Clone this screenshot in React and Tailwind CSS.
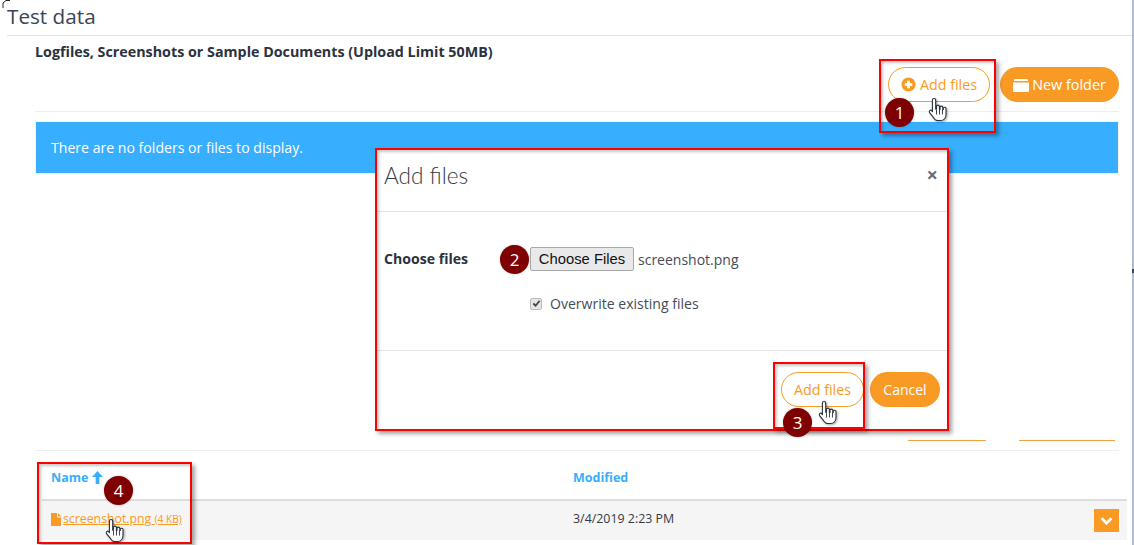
import React from "react";

function Hand({ className }) {
  return (
    <svg viewBox="0 0 20 26" className={"absolute w-[20px] h-[26px] drop-shadow-[1px_1px_1px_rgba(0,0,0,0.35)] " + className}>
      <path
        d="M6 1.500c1 0 1.700.7 1.700 1.800v9l.8 0V9.600c0-1 .7-1.500 1.500-1.500s1.400.6 1.400 1.500v2.800h.6v-1.900c0-.9.7-1.400 1.400-1.400s1.400.6 1.400 1.400v2h.5v-1c0-.9.6-1.300 1.300-1.300s1.400.5 1.400 1.400v5.600c0 3.500-2.200 6.300-5.500 6.300H10c-2.200 0-3.400-1-4.400-2.800L1.600 15.600c-.6-1-.3-1.800.3-2.200.7-.4 1.500-.2 2 .5l.5.8V3.300c0-1.100.7-1.800 1.600-1.800z"
        fill="#fff"
        stroke="#2b3240"
        strokeWidth="1.1"
        strokeLinejoin="round"
      />
      <path d="M8.500 12.500v5M11.500 12.500v5M14.500 12.500v5" stroke="#2b3240" strokeWidth="0.9" />
    </svg>
  );
}

function Badge({ n, className }) {
  return (
    <div
      className={
        "absolute flex h-[29px] w-[29px] items-center justify-center rounded-full bg-[#7f0000] text-[17px] leading-none text-white shadow-[0_0_2px_rgba(0,0,0,0.3)] " +
        className
      }
    >
      {n}
    </div>
  );
}

function RedBox({ className }) {
  return (
    <div
      className={
        "pointer-events-none absolute border-2 border-[#ff0000] shadow-[3px_3px_4px_rgba(0,0,0,0.35),inset_2px_2px_3px_rgba(0,0,0,0.22)] " +
        className
      }
    />
  );
}

export default function App() {
  return (
    <div className="relative h-[545px] w-[1134px] overflow-hidden bg-white font-['Open_Sans',sans-serif] text-[#333b47]">
      <div className="h-full border-r-2 border-[#b0bcd0] pl-[7px]">
        {/* Title */}
        <div className="flex h-[36px] items-center border-b border-[#e4e4e4] text-[20.700px] leading-none text-[#3a4555]">
          <span className="relative top-[-1px]">Test data</span>
        </div>

        <div className="ml-[28px] mr-[13px]">
          <div className="flex h-[76px] flex-col border-b border-[#eeeeee]">
            <div className="pt-[6px] text-[14.300px] font-bold leading-[19px] text-[#2b3240]">
              Logfiles, Screenshots or Sample Documents (Upload Limit 50MB)
            </div>
            <div className="mt-[6px] flex justify-end gap-[10px] pr-[0px]">
              <button className="flex h-[35px] w-[102px] items-center justify-center gap-[4px] rounded-full border border-[#f99a25] bg-white text-[14.300px] text-[#f99a25]">
                <svg viewBox="0 0 16 16" className="h-[15px] w-[15px]">
                  <circle cx="8" cy="8" r="7.500" fill="#f99a25" />
                  <path d="M8 4v8M4 8h8" stroke="#fff" strokeWidth="3" />
                </svg>
                Add files
              </button>
              <button className="flex h-[35px] w-[119px] items-center justify-center gap-[3px] rounded-full bg-[#f99a25] text-[14.400px] text-white">
                <svg viewBox="0 0 16 14" className="h-[14px] w-[16px]">
                  <path d="M1 3V2q0-1 1-1h12q1 0 1 1v1zM0 4.500h16V13q0 1-1 1H1q-1 0-1-1z" fill="#fff" />
                </svg>
                New folder
              </button>
            </div>
          </div>

          <div className="mt-[9px] flex h-[53px] items-center border border-[#fdf0e0] bg-[#38aeff] pl-[15px] text-[14.100px] text-white">
            There are no folders or files to display.
          </div>

          {/* Buttons hidden behind the dialog */}
          <div className="mt-[266px] flex h-[1px] justify-end gap-[33px] pr-[4px]">
            <div className="h-px w-[78px] bg-[#f5a040]" />
            <div className="h-px w-[96px] bg-[#f5a040]" />
          </div>
          <div className="mt-[9px] border-t border-[#eeeeee]" />
        </div>

        {/* Table */}
        <div className="ml-[35px] mr-[5px]">
          <div className="flex h-[50px] items-end border-b-2 border-[#dddddd] pb-[13px] text-[12.500px] font-bold leading-[17px] text-[#38aeff]">
            <div className="flex w-[531px] items-center gap-[4px] pl-[9px]">
              Name
              <svg viewBox="0 0 12 14" className="h-[13px] w-[11px]">
                <path d="M6 0l6 6.500H8V14H4V6.500H0z" fill="#38aeff" />
              </svg>
            </div>
            <div>Modified</div>
          </div>
          <div className="flex h-[39px] items-center bg-[#f5f5f5]">
            <div className="mb-[3px] flex w-[531px] items-center gap-[2px] pl-[9px] text-[#f99a25]">
              <svg viewBox="0 0 10 13" className="h-[13px] w-[10px]">
                <path d="M0 0h6v4.500h4V13H0zM7 0l3 3.500H7z" fill="#f99a25" />
              </svg>
              <span className="text-[12.300px] underline">
                screenshot.png <span className="text-[10.200px]">(4 KB)</span>
              </span>
            </div>
            <div className="mb-[2px] text-[12.400px] text-[#333b47]">3/4/2019 2:23 PM</div>
            <div className="ml-auto mr-[8px] flex h-[23px] w-[25px] items-center justify-center bg-[#f99a25]">
              <svg viewBox="0 0 14 10" className="h-[9px] w-[13px]">
                <path d="M1.500 2.500L7 8l5.500-5.500" fill="none" stroke="#fff" strokeWidth="3" />
              </svg>
            </div>
          </div>
        </div>
      </div>

      {/* Dialog */}
      <div className="absolute left-[377px] top-[150px] flex h-[279px] w-[570px] flex-col bg-white">
        <div className="flex h-[62px] items-start justify-between border-b border-[#e4e4e4] pl-[7px] pr-[9px] pt-[10px]">
          <span className="font-['Lato',sans-serif] text-[22.600px] font-light leading-[32px] text-[#333b47]">Add files</span>
          <span className="mt-[5px] text-[20px] font-bold leading-none text-[#666c78]">×</span>
        </div>
        <div className="flex h-[139px] flex-col border-b border-[#e4e4e4] pl-[7px]">
          <div className="mt-[35px] flex items-center">
            <div className="w-[146px] text-[14.100px] font-bold text-[#2b3240]">Choose files</div>
            <button className="h-[24px] w-[104px] rounded-[2px] border border-[#a9a9a9] bg-[#e9e9e9] font-['Liberation_Sans',sans-serif] text-[14.800px] leading-none text-[#111]">
              Choose Files
            </button>
            <span className="ml-[4px] text-[14px] text-[#444c58]">screenshot.png</span>
          </div>
          <label className="ml-[146px] mt-[22px] flex items-center gap-[8px] text-[14.050px] text-[#444c58]">
            <span className="flex h-[12px] w-[12px] items-center justify-center rounded-[2px] border border-[#bbbbbb] bg-[#e6e6e6]">
              <svg viewBox="0 0 10 10" className="h-[9px] w-[9px]">
                <path d="M1.500 5l2.500 2.500L8.500 2" fill="none" stroke="#444" strokeWidth="2" />
              </svg>
            </span>
            Overwrite existing files
          </label>
        </div>
        <div className="flex flex-1 items-start justify-end gap-[6px] pr-[7px] pt-[21px]">
          <button className="h-[35px] w-[83px] rounded-full border border-[#f99a25] bg-white text-[14.300px] text-[#f99a25]">
            Add files
          </button>
          <button className="h-[35px] w-[70px] rounded-full bg-[#f99a25] text-[14px] text-white">Cancel</button>
        </div>
      </div>

      {/* Annotations */}
      <RedBox className="left-[375px] top-[148px] h-[283px] w-[574px]" />
      <RedBox className="left-[879px] top-[59px] h-[74px] w-[117px]" />
      <RedBox className="left-[773px] top-[362px] h-[67px] w-[92px]" />
      <RedBox className="left-[37px] top-[462px] h-[82px] w-[155px]" />

      <Badge n="1" className="left-[885px] top-[98px]" />
      <Badge n="2" className="left-[500px] top-[245px]" />
      <Badge n="3" className="left-[783px] top-[408px]" />
      <Badge n="4" className="left-[104px] top-[476px]" />

      <Hand className="left-[928px] top-[97px]" />
      <Hand className="left-[818px] top-[400px]" />
      <Hand className="left-[105px] top-[518px]" />

      <svg viewBox="0 0 10 10" className="absolute left-0 top-0 h-[10px] w-[10px]">
        <path d="M3 8V3l3-2.500h5" fill="none" stroke="#222" strokeWidth="1" />
      </svg>
      <div className="absolute left-[1132px] top-[269px] h-[4px] w-[2px] border border-[#444] bg-white" />
    </div>
  );
}
